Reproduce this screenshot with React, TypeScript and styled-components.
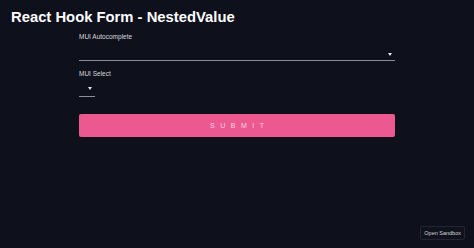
import React from "react";
import styled, { createGlobalStyle } from "styled-components";

const Global = createGlobalStyle`
  html, body { margin: 0; padding: 0; background: #0e101c; }
  body { font-family: "Liberation Sans", Arial, sans-serif; color: #fff; }
`;

const Page = styled.div`
  width: 474px;
  height: 248px;
  background: #0e101c;
  position: relative;
  overflow: hidden;
`;

const Title = styled.h1`
  margin: 0;
  padding: 8px 0 0 11px;
  font-size: 14.8px;
  font-weight: 700;
  line-height: 18px;
  color: #fff;
`;

const Form = styled.form`
  width: 316px;
  margin: 7px auto 0;
  display: flex;
  flex-direction: column;
`;

const Label = styled.label`
  font-size: 6.5px;
  color: #d8d9dd;
  line-height: 8px;
  display: block;
`;

const Field = styled.div<{ $width?: string; $height: number }>`
  position: relative;
  width: ${(p) => p.$width || "100%"};
  height: ${(p) => p.$height}px;
  border-bottom: 1px solid #8d8f98;
  box-sizing: border-box;
`;

const Arrow = styled.span<{ $right: number; $bottom: number }>`
  position: absolute;
  right: ${(p) => p.$right}px;
  bottom: ${(p) => p.$bottom}px;
  width: 0;
  height: 0;
  border-left: 2.5px solid transparent;
  border-right: 2.5px solid transparent;
  border-top: 3px solid #e8e8ea;
`;

const Group = styled.div<{ $mt: number }>`
  margin-top: ${(p) => p.$mt}px;
  display: flex;
  flex-direction: column;
`;

const Submit = styled.button`
  margin-top: 17px;
  height: 23px;
  width: 100%;
  border: none;
  border-radius: 2px;
  background: #ec5990;
  color: #fbd3e1;
  font-family: "Liberation Sans", Arial, sans-serif;
  font-size: 7px;
  letter-spacing: 5.5px;
  text-indent: 5.5px;
  text-transform: uppercase;
  padding: 0;
`;

const Sandbox = styled.button`
  position: absolute;
  right: 9px;
  bottom: 8px;
  height: 14px;
  padding: 0 3px;
  background: #0f111c;
  border: 1px solid #23252f;
  border-radius: 2px;
  color: #d6d7db;
  font-family: "Liberation Sans", Arial, sans-serif;
  font-size: 5.5px;
`;

export default function App() {
  return (
    <Page>
      <Global />
      <Title>React Hook Form - NestedValue</Title>
      <Form onSubmit={(e) => e.preventDefault()}>
        <Group $mt={0}>
          <Label>MUI Autocomplete</Label>
          <Field $height={20}>
            <Arrow $right={3} $bottom={4} />
          </Field>
        </Group>
        <Group $mt={9}>
          <Label>MUI Select</Label>
          <Field $width="16px" $height={19}>
            <Arrow $right={3} $bottom={6} />
          </Field>
        </Group>
        <Submit type="submit">Submit</Submit>
      </Form>
      <Sandbox>Open Sandbox</Sandbox>
    </Page>
  );
}
